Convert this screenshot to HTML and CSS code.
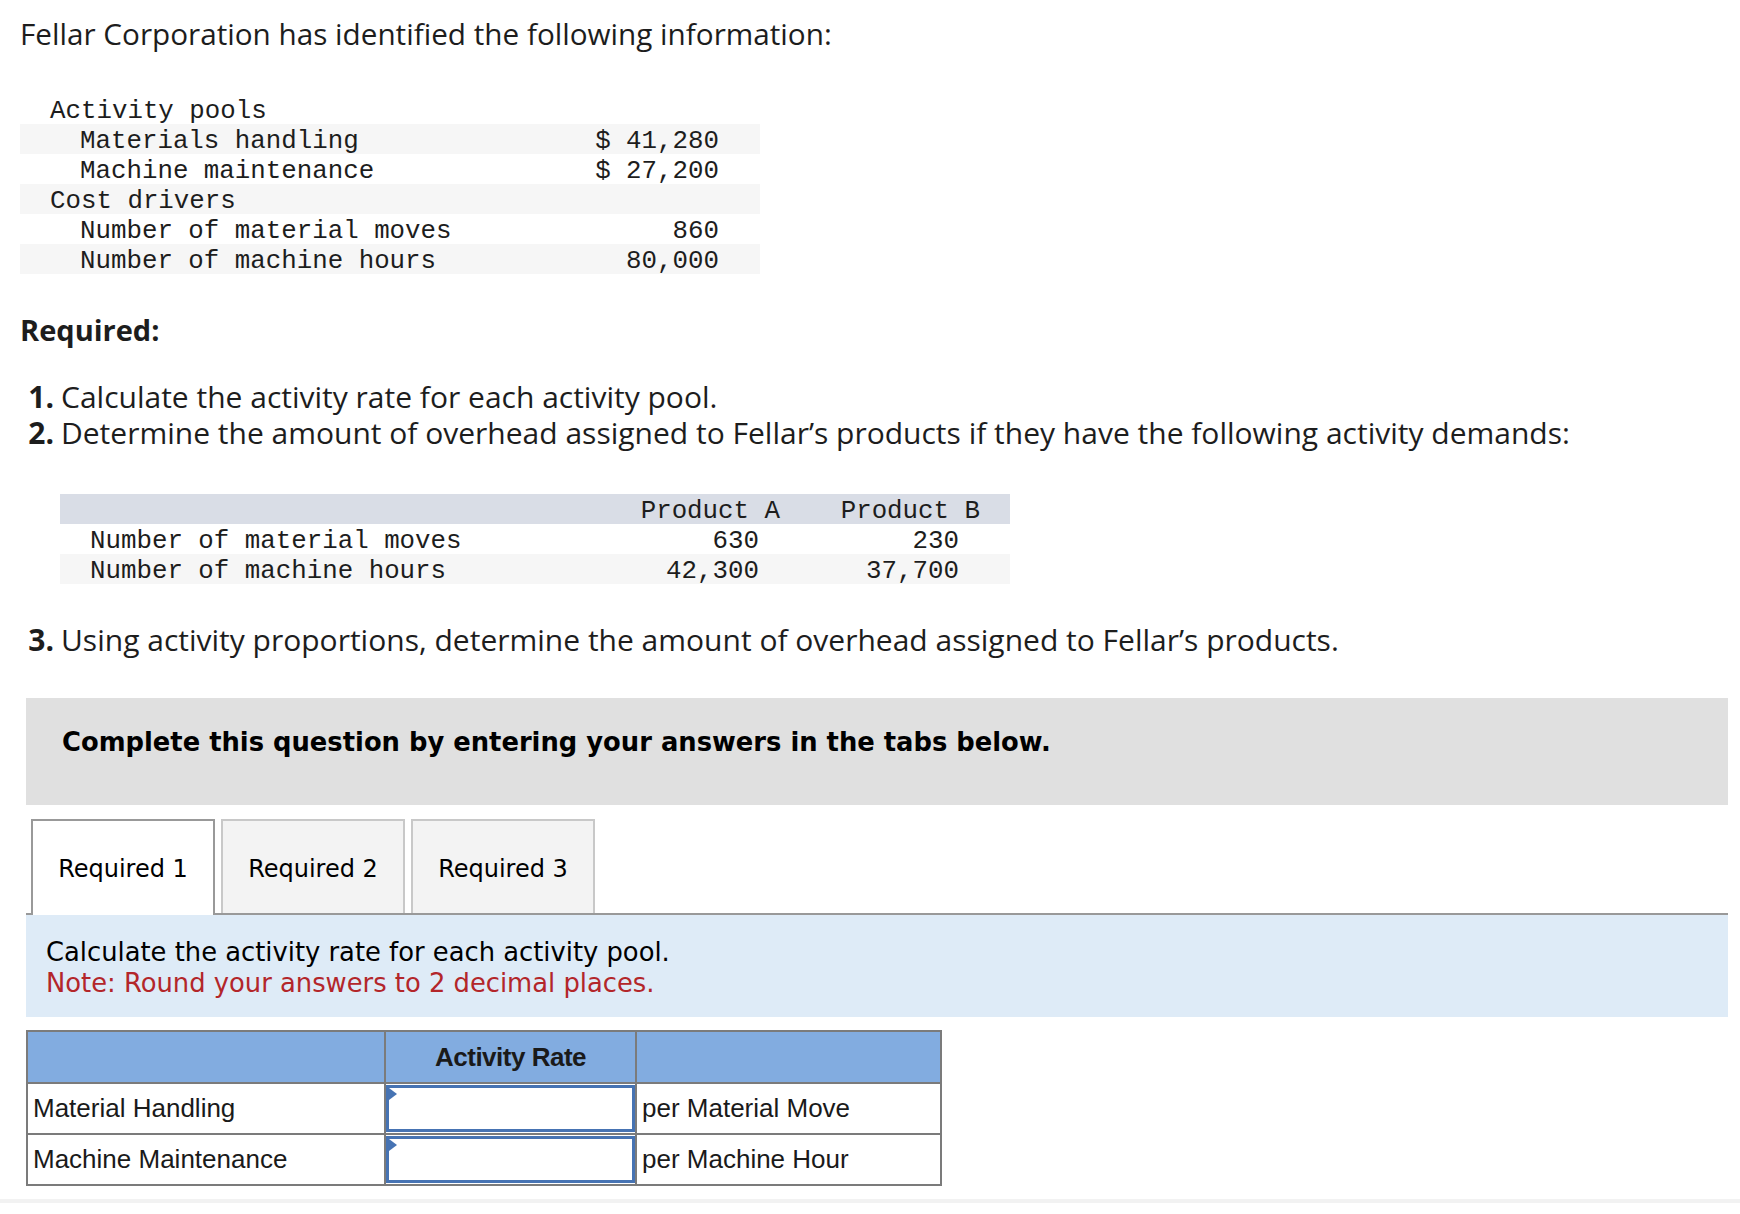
FILE: index.html
```html
<!DOCTYPE html>
<html>
<head>
<meta charset="utf-8">
<link rel="stylesheet" href="styles.css">
</head>
<body>
<div class="page">
  <p class="title">Fellar Corporation has identified the following information:</p>

  <table class="mono info">
    <tr><td class="l1">Activity pools</td><td class="num"></td></tr>
    <tr class="stripe"><td class="l2">Materials handling</td><td class="num">$ 41,280</td></tr>
    <tr><td class="l2">Machine maintenance</td><td class="num">$ 27,200</td></tr>
    <tr class="stripe"><td class="l1">Cost drivers</td><td class="num"></td></tr>
    <tr><td class="l2">Number of material moves</td><td class="num">860</td></tr>
    <tr class="stripe"><td class="l2">Number of machine hours</td><td class="num">80,000</td></tr>
  </table>

  <p class="required">Required:</p>

  <div class="items">
    <p class="item"><span class="no">1.</span><span>Calculate the activity rate for each activity pool.</span></p>
    <p class="item"><span class="no">2.</span><span>Determine the amount of overhead assigned to Fellar’s products if they have the following activity demands:</span></p>
  </div>

  <table class="mono demand">
    <tr class="head"><td class="lab"></td><td class="ca">Product A</td><td class="cb">Product B</td></tr>
    <tr><td class="lab">Number of material moves</td><td class="ca v">630</td><td class="cb v">230</td></tr>
    <tr class="stripe"><td class="lab">Number of machine hours</td><td class="ca v">42,300</td><td class="cb v">37,700</td></tr>
  </table>

  <p class="item item3"><span class="no">3.</span><span>Using activity proportions, determine the amount of overhead assigned to Fellar’s products.</span></p>

  <div class="question">
    <div class="complete">Complete this question by entering your answers in the tabs below.</div>

    <div class="tabs">
      <div class="tab active">Required 1</div>
      <div class="tab">Required 2</div>
      <div class="tab">Required 3</div>
    </div>

    <div class="instr">
      <div>Calculate the activity rate for each activity pool.</div>
      <div class="note">Note: Round your answers to 2 decimal places.</div>
    </div>

    <table class="answer">
      <tr class="ahead"><th></th><th>Activity Rate</th><th></th></tr>
      <tr><td>Material Handling</td><td class="inp"><div class="box"><span class="tri"></span></div></td><td>per Material Move</td></tr>
      <tr><td>Machine Maintenance</td><td class="inp"><div class="box"><span class="tri"></span></div></td><td>per Machine Hour</td></tr>
    </table>
  </div>
  <div class="footline"></div>
</div>
</body>
</html>
```

FILE: styles.css
```css
* { box-sizing: border-box; }
html, body { margin: 0; padding: 0; background: #fff; }
body { color: #1d1d1d; font-family: "Open Sans", "Liberation Sans", sans-serif; }

.page { padding: 18px 0 0 0; width: 1740px; }

.title { margin: 0 0 0 20px; font-size: 29.7px; line-height: 32px; }

.mono { font-family: "Liberation Mono", "Courier New", monospace; font-size: 25.8px; color: #1d1d1d; }
table { border-collapse: collapse; border-spacing: 0; }
.mono td { padding: 5px 0 0 0; height: 30px; line-height: 25px; white-space: pre; }

.info { margin: 44px 0 0 20px; width: 740px; }
.info .l1 { padding-left: 30px; }
.info .l2 { padding-left: 60px; }
.info .num { text-align: right; padding-right: 41px; }
.stripe { background: #f6f6f6; }

.required { margin: 40px 0 0 20px; font-size: 29px; line-height: 32px; font-weight: 700; }

.items { margin-top: 33px; }
.item { margin: 0; font-size: 30px; line-height: 36px; display: flex; }
.item .no { display: inline-block; width: 61px; text-align: right; font-weight: 700; padding-right: 7px; flex: none; }

.demand { margin: 43px 0 0 60px; width: 950px; }
.demand .head { background: #d9dde6; }
.demand .lab { padding-left: 30px; width: 560px; }
.demand .ca { text-align: right; padding-right: 20px; width: 180px; }
.demand .cb { text-align: right; padding-right: 30px; width: 210px; }
.demand .ca.v { padding-right: 41px; }
.demand .cb.v { padding-right: 51px; }

.item3 { margin-top: 38px; }

.question { margin: 40px 12px 0 26px; font-family: "DejaVu Sans", Verdana, sans-serif; }

.complete { background: #e0e0e0; height: 107px; padding: 0 0 0 36px; font-weight: 700; font-size: 25.8px; line-height: 88px; color: #000; }

.tabs { display: flex; gap: 6px; margin-top: 14px; padding-left: 5px; border-bottom: 2px solid #999; }
.tab { width: 184px; height: 94px; border: 2px solid #c8c8c8; border-bottom: none; background: #f3f3f3; font-size: 24px; color: #000; display: flex; align-items: center; justify-content: center; padding-top: 4px; }
.tab.active { background: #fff; border-color: #999; height: 96px; margin-bottom: -2px; padding-top: 2px; }

.instr { background: #deebf7; height: 102px; padding: 22px 0 0 20px; font-size: 25.8px; line-height: 31px; color: #000; }
.instr .note { color: #b3262a; }

.answer { margin-top: 13px; width: 916px; font-family: "Liberation Sans", Arial, sans-serif; font-size: 26px; color: #1a1a1a; }
.answer th, .answer td { border: 2px solid #7b7b7b; padding: 0; }
.answer th { background: #82ace0; height: 52px; font-size: 26px; font-weight: 700; text-align: center; color: #1a1a1a; letter-spacing: -0.5px; }
.answer th:nth-child(1) { width: 358px; }
.answer th:nth-child(2) { width: 251px; }
.answer td { height: 51px; padding-left: 5px; }
.answer td.inp { padding: 0; position: relative; }
.box { position: relative; height: 47px; border: 3px solid #4673b3; }
.tri { position: absolute; left: 0; top: 0; width: 0; height: 0; border-top: 6px solid transparent; border-bottom: 6px solid transparent; border-left: 8px solid #4673b3; }

.footline { margin-top: 13px; height: 4px; background: #f2f2f2; }
```
